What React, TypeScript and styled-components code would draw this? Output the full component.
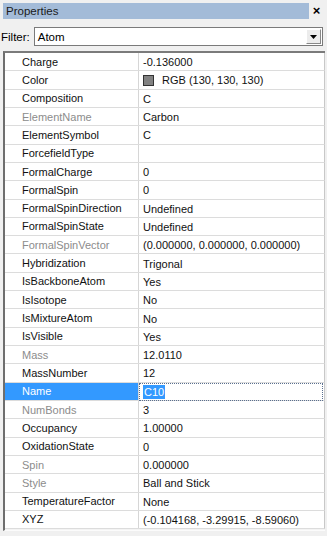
import * as React from "react";
import styled, { createGlobalStyle } from "styled-components";

const GlobalStyle = createGlobalStyle`
  html, body {
    margin: 0;
    padding: 0;
    background: #f0f0f0;
  }
  body {
    font-family: "Liberation Sans", Arial, sans-serif;
    font-size: 11px;
    color: #000;
  }
`;

interface PropRow {
  name: string;
  value: string;
  readOnly?: boolean;
  swatch?: string;
  selected?: boolean;
}

const rows: PropRow[] = [
  { name: "Charge", value: "-0.136000" },
  { name: "Color", value: "RGB (130, 130, 130)", swatch: "#828282" },
  { name: "Composition", value: "C" },
  { name: "ElementName", value: "Carbon", readOnly: true },
  { name: "ElementSymbol", value: "C" },
  { name: "ForcefieldType", value: "" },
  { name: "FormalCharge", value: "0" },
  { name: "FormalSpin", value: "0" },
  { name: "FormalSpinDirection", value: "Undefined" },
  { name: "FormalSpinState", value: "Undefined" },
  { name: "FormalSpinVector", value: "(0.000000, 0.000000, 0.000000)", readOnly: true },
  { name: "Hybridization", value: "Trigonal" },
  { name: "IsBackboneAtom", value: "Yes" },
  { name: "IsIsotope", value: "No" },
  { name: "IsMixtureAtom", value: "No" },
  { name: "IsVisible", value: "Yes" },
  { name: "Mass", value: "12.0110", readOnly: true },
  { name: "MassNumber", value: "12" },
  { name: "Name", value: "C10", selected: true },
  { name: "NumBonds", value: "3", readOnly: true },
  { name: "Occupancy", value: "1.00000" },
  { name: "OxidationState", value: "0" },
  { name: "Spin", value: "0.000000", readOnly: true },
  { name: "Style", value: "Ball and Stick", readOnly: true },
  { name: "TemperatureFactor", value: "None" },
  { name: "XYZ", value: "(-0.104168, -3.29915, -8.59060)" },
];

export default function App() {
  return (
    <>
      <GlobalStyle />
      <Panel>
        <TitleRow>
          <TitleBar>Properties</TitleBar>
          <CloseButton>×</CloseButton>
        </TitleRow>
        <FilterRow>
          <FilterLabel>Filter:</FilterLabel>
          <Select>
            <SelectText>Atom</SelectText>
            <ArrowButton>
              <svg width="7" height="4" viewBox="0 0 7 4">
                <path d="M0 0H7L3.5 4Z" fill="#000" />
              </svg>
            </ArrowButton>
          </Select>
        </FilterRow>
        <Grid>
          {rows.map((row) => (
            <Row key={row.name}>
              <NameCell $readOnly={row.readOnly} $selected={row.selected}>
                {row.name}
              </NameCell>
              <ValueCell $selected={row.selected}>
                {row.swatch && <Swatch style={{ background: row.swatch }} />}
                {row.selected ? <Highlight>{row.value}</Highlight> : row.value}
              </ValueCell>
            </Row>
          ))}
        </Grid>
      </Panel>
    </>
  );
}

const Panel = styled.div`
  display: flex;
  flex-direction: column;
  padding: 3px 3px 0 3px;
  width: 327px;
  box-sizing: border-box;
`;

const TitleRow = styled.div`
  display: flex;
  align-items: center;
  height: 16px;
`;

const TitleBar = styled.div`
  flex: 1;
  height: 16px;
  line-height: 16px;
  background: #a3bbd8;
  color: #1a1a1a;
  padding-left: 3px;
  font-size: 11.5px;
`;

const CloseButton = styled.div`
  width: 15px;
  text-align: center;
  font-size: 13px;
  font-weight: bold;
  line-height: 16px;
`;

const FilterRow = styled.div`
  display: flex;
  align-items: center;
  gap: 4px;
  margin-top: 8px;
  margin-left: -2px;
`;

const FilterLabel = styled.div`
  font-size: 11.5px;
`;

const Select = styled.div`
  flex: 1;
  display: flex;
  align-items: center;
  height: 19px;
  box-sizing: border-box;
  border: 1px solid #7a7a7a;
  background: #fff;
  margin-right: 1px;
`;

const SelectText = styled.div`
  flex: 1;
  padding-left: 3px;
  font-size: 11.5px;
`;

const ArrowButton = styled.div`
  width: 15px;
  height: 15px;
  margin-right: 1px;
  display: flex;
  align-items: center;
  justify-content: center;
  background: #ececec;
  border-top: 1px solid #fff;
  border-left: 1px solid #fff;
  border-right: 1px solid #888;
  border-bottom: 1px solid #888;
  box-sizing: border-box;
`;

const Grid = styled.div`
  margin-top: 5px;
  width: 320px;
  display: flex;
  flex-direction: column;
  border-top: 2px solid #7b7b7b;
  border-left: 2px solid #6e6e6e;
  border-bottom: 1px solid #fbfbfb;
  background: #f3f3f3;
  padding-bottom: 1px;
`;

const Row = styled.div`
  display: grid;
  grid-template-columns: 134px 184px;
  height: 18.32px;
  box-sizing: border-box;
  background: #fff;
  border-bottom: 1px solid #dcdcdc;
  border-right: 1px solid #c8c8c8;
`;

const NameCell = styled.div<{ $readOnly?: boolean; $selected?: boolean }>`
  display: flex;
  align-items: center;
  padding-left: 17px;
  border-right: 1px solid #d6d6d6;
  background: ${(p) => (p.$selected ? "#3399ff" : "#fff")};
  color: ${(p) => (p.$selected ? "#fff" : p.$readOnly ? "#8c8c8c" : "#111")};
  white-space: nowrap;
`;

const ValueCell = styled.div<{ $selected?: boolean }>`
  display: flex;
  align-items: center;
  padding-left: 3px;
  white-space: nowrap;
  overflow: hidden;
  color: #111;
  box-sizing: border-box;
  border: 1px dotted ${(p) => (p.$selected ? "#5a6f8f" : "transparent")};
  margin-bottom: -1px;
`;

const Swatch = styled.span`
  display: inline-block;
  width: 11px;
  height: 11px;
  border: 1px solid #333;
  box-sizing: border-box;
  margin-right: 8px;
`;

const Highlight = styled.span`
  background: #3399ff;
  color: #fff;
  padding: 1px 1px;
`;
